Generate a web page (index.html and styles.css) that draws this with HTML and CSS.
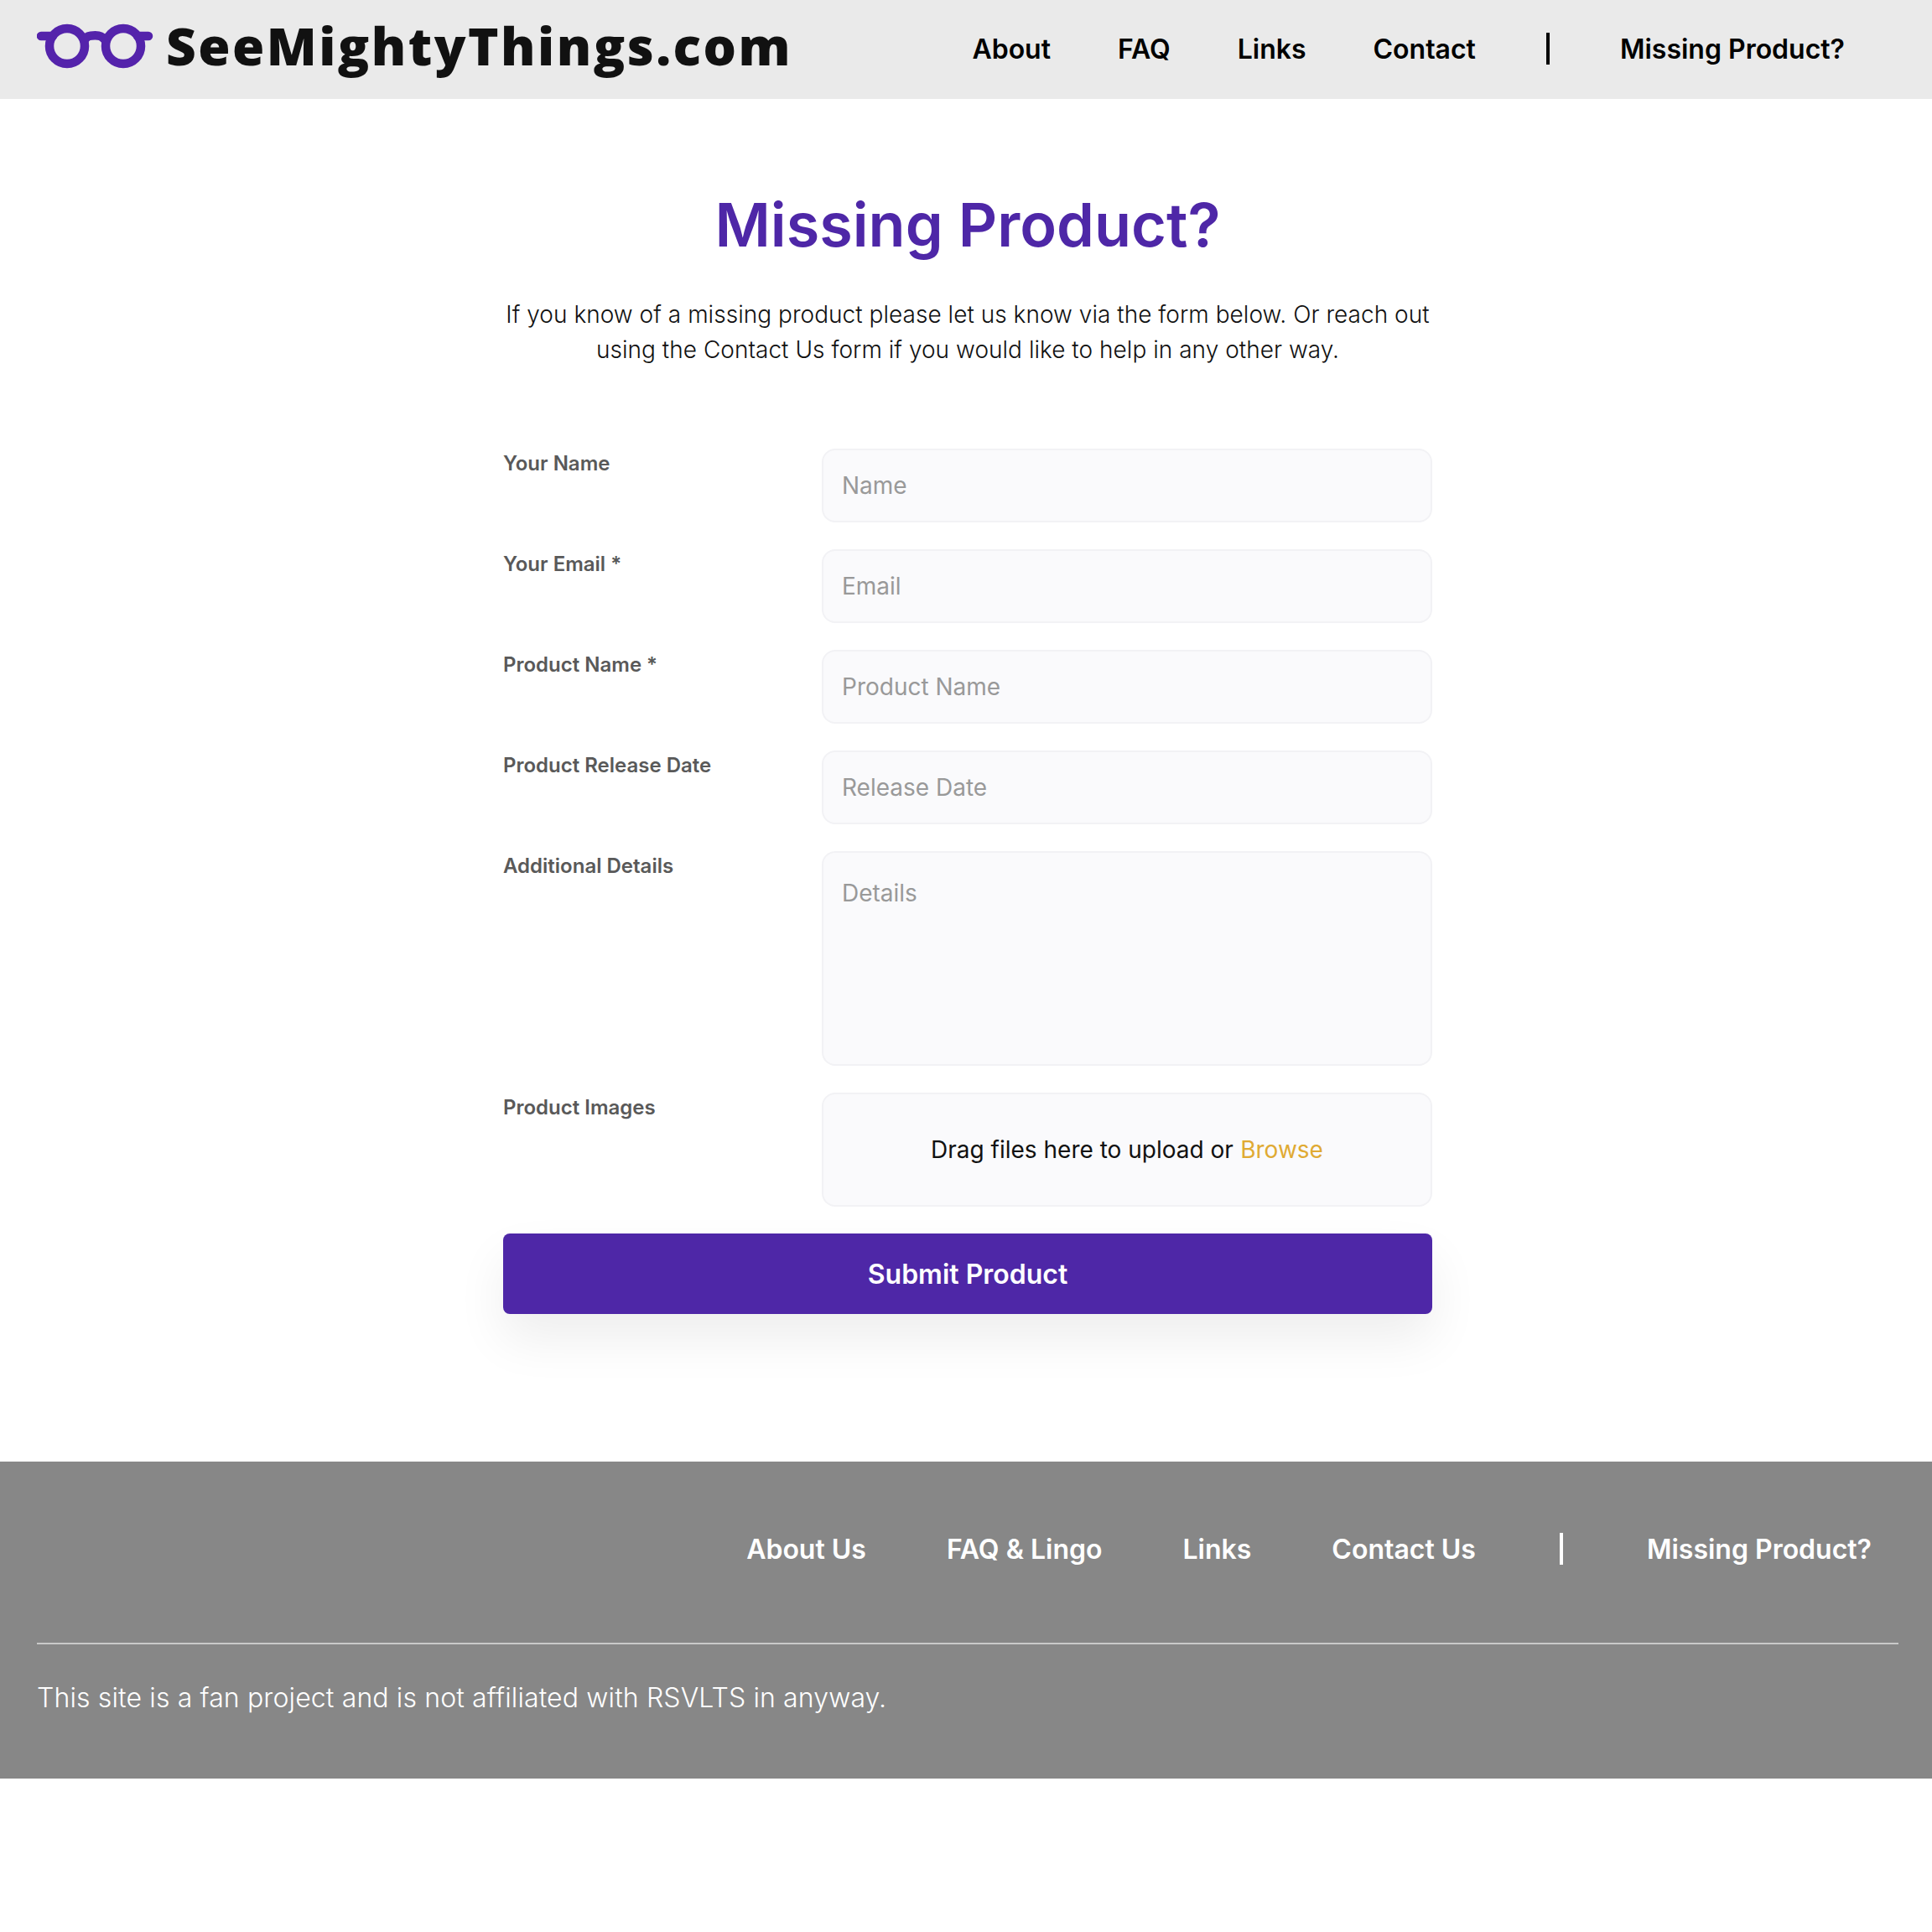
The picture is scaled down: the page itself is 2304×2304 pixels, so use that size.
FILE: index.html
```html
<!DOCTYPE html>
<html>
  <head>
    <title>Missing Product?</title>
    <meta http-equiv="Content-Type" content="text/html; charset=UTF-8"/>
    <link rel="stylesheet" href="styles.css">
  </head>
  <body>
    <header class="site-header">
      <a class="logo" href="#">
        <svg class="logo-icon" width="140" height="56" viewBox="0 0 140 56">
          <g fill="none" stroke="#5423ab" stroke-width="10.5" stroke-linecap="round">
            <circle cx="36" cy="28" r="21"/>
            <circle cx="103" cy="28" r="21"/>
            <path d="M5 16h14M120 16h13"/>
            <path d="M56 22c3.500-6 6.500-6.800 13.500-6.800s8 1.800 13.500 6.800" stroke-linecap="butt"/>
          </g>
        </svg>
        <span class="logo-text">SeeMightyThings.com</span>
      </a>
      <nav class="header-nav">
        <a href="#">About</a>
        <a href="#">FAQ</a>
        <a href="#">Links</a>
        <a href="#">Contact</a>
        <span class="nav-sep"></span>
        <a href="#">Missing Product?</a>
      </nav>
    </header>

    <main class="content">
      <h1>Missing Product?</h1>
      <p class="intro">If you know of a missing product please let us know via the form below. Or reach out using the Contact Us form if you would like to help in any other way.</p>

      <form class="product-form">
        <div class="form-row">
          <label for="name">Your Name</label>
          <input id="name" type="text" placeholder="Name">
        </div>
        <div class="form-row">
          <label for="email">Your Email *</label>
          <input id="email" type="text" placeholder="Email">
        </div>
        <div class="form-row">
          <label for="product">Product Name *</label>
          <input id="product" type="text" placeholder="Product Name">
        </div>
        <div class="form-row">
          <label for="release">Product Release Date</label>
          <input id="release" type="text" placeholder="Release Date">
        </div>
        <div class="form-row">
          <label for="details">Additional Details</label>
          <textarea id="details" placeholder="Details"></textarea>
        </div>
        <div class="form-row">
          <label>Product Images</label>
          <div class="dropzone">Drag files here to upload or <a href="#">Browse</a></div>
        </div>
        <button class="submit" type="button">Submit Product</button>
      </form>
    </main>

    <footer class="site-footer">
      <nav class="footer-nav">
        <a href="#">About Us</a>
        <a href="#">FAQ &amp; Lingo</a>
        <a href="#">Links</a>
        <a href="#">Contact Us</a>
        <span class="nav-sep"></span>
        <a href="#">Missing Product?</a>
      </nav>
      <p class="disclaimer">This site is a fan project and is not affiliated with RSVLTS in anyway.</p>
    </footer>
  </body>
</html>
```

FILE: styles.css
```css
* {
  box-sizing: border-box;
}

body {
  margin: 0;
  font-family: Inter, 'Liberation Sans', sans-serif;
  color: #1a1a1a;
  background: #fff;
}

a {
  color: inherit;
  text-decoration: none;
}

/* header */
.site-header {
  display: flex;
  align-items: center;
  justify-content: space-between;
  height: 118px;
  padding: 0 104px 0 44px;
  background: #eaeaea;
}

.logo {
  display: flex;
  align-items: center;
  gap: 14px;
  margin-bottom: 10px;
}

.logo-icon {
  flex: none;
  margin-top: 2px;
}

.logo-text {
  font-family: 'Open Sans', sans-serif;
  font-size: 62px;
  font-weight: 800;
  letter-spacing: 2.45px;
  line-height: 1;
  color: #111;
}

.header-nav {
  display: flex;
  align-items: center;
  gap: 80px;
  margin-bottom: 2px;
  font-size: 32px;
  font-weight: 600;
  color: #000;
}

.nav-sep {
  width: 4px;
  height: 38px;
  margin: 0 4px;
  background: currentColor;
}

/* form */
.content {
  width: 1108px;
  margin: 0 auto;
  padding: 106px 0 176px;
  transform: translateX(2px);
}

h1 {
  margin: 0;
  font-size: 72px;
  font-weight: 600;
  line-height: 88px;
  text-align: center;
  color: #4e27a7;
}

.intro {
  margin: 42px 0 0;
  font-size: 28px;
  font-weight: 300;
  letter-spacing: 0.03px;
  line-height: 42px;
  text-align: center;
  color: #111;
}

.product-form {
  display: flex;
  flex-direction: column;
  gap: 32px;
  margin-top: 97px;
}

.form-row {
  display: grid;
  grid-template-columns: 380px 1fr;
}

label {
  padding-top: 2px;
  font-size: 24px;
  font-weight: 600;
  line-height: 32px;
  color: #595959;
}

input,
textarea,
.dropzone {
  width: 100%;
  border: 2px solid #f2f2f5;
  border-radius: 16px;
  background: #fafafc;
  font-family: inherit;
  font-size: 28px;
  color: #111;
}

input {
  height: 88px;
  padding: 0 22px;
}

textarea {
  display: block;
  height: 256px;
  padding: 31px 22px;
  resize: none;
}

input::placeholder,
textarea::placeholder {
  color: #999;
  opacity: 1;
}

.dropzone {
  display: flex;
  align-items: center;
  justify-content: center;
  gap: 0.3em;
  height: 136px;
}

.dropzone a {
  color: #e0aa33;
}

.submit {
  height: 96px;
  border: 0;
  border-radius: 8px;
  background: #4e27a7;
  font-family: inherit;
  font-size: 32px;
  font-weight: 600;
  color: #fff;
  box-shadow: 0 30px 60px rgba(0, 0, 0, 0.07);
}

/* footer */
.site-footer {
  height: 378px;
  padding: 64px 40px 0 44px;
  background: #878787;
  color: #fff;
}

.footer-nav {
  display: flex;
  align-items: center;
  justify-content: flex-end;
  gap: 96px;
  height: 154px;
  padding: 0 32px 72px 0;
  border-bottom: 2px solid #c9c9c9;
  font-size: 32px;
  font-weight: 600;
}

.disclaimer {
  margin: 44px 0 0;
  font-size: 32px;
  font-weight: 300;
  letter-spacing: 0.13px;
  line-height: 40px;
}
```
